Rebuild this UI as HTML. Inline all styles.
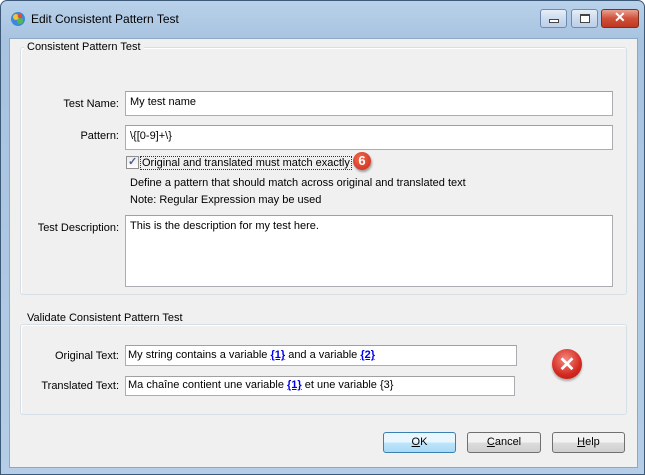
<!DOCTYPE html>
<html><head><style>
*{box-sizing:border-box;margin:0;padding:0}
body{width:645px;height:475px;overflow:hidden;font-family:"Liberation Sans",sans-serif;font-size:11px;color:#000;background:#fff}
.win{position:absolute;left:0;top:0;width:645px;height:475px;border-radius:7px 7px 0 0;background:linear-gradient(#b9d1ea,#a7c3e0 40px,#b5cde6);border:1px solid #3c5a78}
.client{position:absolute;left:8px;top:37px;width:629px;height:430px;background:#f0f0f0;border:1px solid #8fa7c0}
.t{position:absolute;white-space:nowrap}
.grp{position:absolute;border:1px solid #d5dfe5;border-radius:3px;box-shadow:inset 1px 1px 0 #fff}
.lg{position:absolute;background:#f0f0f0;padding:0 3px;white-space:nowrap}
.in{position:absolute;background:#fff;border:1px solid #abadb3;border-top-color:#a0a0a0;padding:2px 4px;white-space:nowrap}
.lbl{position:absolute;text-align:right;white-space:nowrap}
.btn{position:absolute;height:21px;border:1px solid #707070;border-radius:3px;background:linear-gradient(#f2f2f2 50%,#dddddd 50%,#cfcfcf);text-align:center;line-height:19px}
a{color:#0000ee;font-weight:bold;text-decoration:underline}
.wb{position:absolute;top:8px;height:19px;border:1px solid #6d8bb0;border-radius:3px;background:linear-gradient(#e6eef8,#cddcee 50%,#bccfe8)}
</style></head><body>
<div class="win">
<svg style="position:absolute;left:9px;top:10px" width="16" height="16"><circle cx="8" cy="8" r="7" fill="#3a8ad8"/><circle cx="6" cy="6" r="3" fill="#f3c237"/><circle cx="10" cy="10" r="3" fill="#56b84c"/><circle cx="10" cy="5" r="2.3" fill="#e04a3a"/></svg>
<div class="t" style="left:30px;top:11px;font-size:12px">Edit Consistent Pattern Test</div>
<div class="wb" style="left:539px;width:27px"><div style="position:absolute;left:8px;top:9px;width:10px;height:4px;border:1px solid #444;background:#fff"></div></div>
<div class="wb" style="left:570px;width:27px"><div style="position:absolute;left:8px;top:4px;width:10px;height:9px;border:1px solid #444;border-top-width:2px;background:#fff"></div></div>
<div class="wb" style="left:600px;width:38px;border-color:#7a3020;background:linear-gradient(#e8a090,#d0503a 50%,#c03820)"><div style="position:absolute;left:12px;top:-1px;color:#fff;font-weight:bold;font-size:14px">✕</div></div>
<div class="client"></div>
</div>

<div class="grp" style="left:20px;top:47px;width:607px;height:248px"></div>
<div class="lg" style="left:24px;top:41px">Consistent Pattern Test</div>

<div class="lbl" style="left:40px;width:79px;top:98px">Test Name:</div>
<div class="in" style="left:125px;top:91px;width:488px;height:25px;padding-top:4px">My test name</div>
<div class="lbl" style="left:40px;width:79px;top:130px">Pattern:</div>
<div class="in" style="left:125px;top:125px;width:488px;height:25px;padding-top:4px">\{[0-9]+\}</div>
<div style="position:absolute;left:126px;top:156px;width:13px;height:13px;border:1px solid #8f8f8f;background:linear-gradient(#eaeaea,#fff)"><div style="position:absolute;left:1px;top:-2px;color:#4a5f97;font-size:11px;font-weight:bold">✓</div></div>
<div class="t" style="left:140px;top:156px;border:1px dotted #333;padding:0 1px">Original and translated must match exactly</div>
<div style="position:absolute;left:353px;top:152px;width:18px;height:18px;border-radius:50%;background:radial-gradient(circle at 40% 35%,#f26a4a,#c8251a);box-shadow:1px 2px 2px rgba(0,0,0,.35);color:#fff;font-weight:bold;font-size:13px;text-align:center;line-height:18px">6</div>
<div class="t" style="left:130px;top:177px">Define a pattern that should match across original and translated text</div>
<div class="t" style="left:130px;top:194px">Note: Regular Expression may be used</div>
<div class="lbl" style="left:20px;width:99px;top:222px">Test Description:</div>
<div class="in" style="left:125px;top:215px;width:488px;height:72px;padding-top:4px">This is the description for my test here.</div>

<div class="grp" style="left:20px;top:324px;width:607px;height:91px"></div>
<div class="lg" style="left:24px;top:312px">Validate Consistent Pattern Test</div>
<div class="lbl" style="left:20px;width:99px;top:350px">Original Text:</div>
<div class="in" style="left:125px;top:345px;width:392px;height:21px;padding:3px 2px">My string contains a variable <a>{1}</a> and a variable <a>{2}</a></div>
<div class="lbl" style="left:20px;width:99px;top:380px">Translated Text:</div>
<div class="in" style="left:125px;top:376px;width:390px;height:20px;padding:2px 2px">Ma chaîne contient une variable <a>{1}</a> et une variable {3}</div>
<div style="position:absolute;left:552px;top:349px;width:30px;height:30px;border-radius:50%;background:radial-gradient(circle at 45% 35%,#f48a80,#d42a20 60%,#a81810);box-shadow:0 2px 2px rgba(0,0,0,.3)"><div style="position:absolute;left:0;width:30px;top:3px;text-align:center;color:#fff;font-weight:bold;font-size:20px">✕</div></div>

<div class="btn" style="left:383px;top:432px;width:73px;border-color:#3c7fb1;background:linear-gradient(#eaf6fd 50%,#bee6fd 50%,#a7d9f5)"><u>O</u>K</div>
<div class="btn" style="left:467px;top:432px;width:74px"><u>C</u>ancel</div>
<div class="btn" style="left:552px;top:432px;width:73px"><u>H</u>elp</div>
</body></html>
